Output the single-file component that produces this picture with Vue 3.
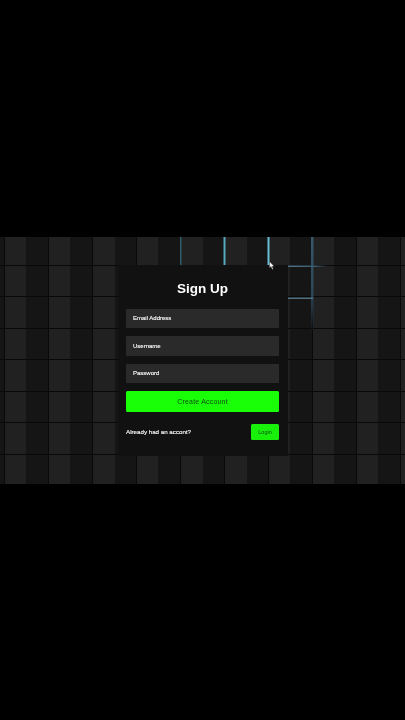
<script setup>
// 11 columns x 9 rows of background tiles, the outer ones get clipped by the hero
const tiles = Array.from({ length: 99 }, (_, i) => i)
</script>

<template>
  <div class="page">
    <section class="hero">
      <div class="tiles">
        <span v-for="t in tiles" :key="t" class="tile"></span>
      </div>

      <svg class="glow" viewBox="0 0 405 247" width="405" height="247" aria-hidden="true">
        <defs>
          <linearGradient id="fadeDown" x1="0" y1="0" x2="0" y2="1">
            <stop offset="0" stop-color="#36586c" />
            <stop offset="0.6" stop-color="#2c4658" />
            <stop offset="1" stop-color="#2c4658" stop-opacity="0" />
          </linearGradient>
          <linearGradient id="fadeRight" x1="0" y1="0" x2="1" y2="0">
            <stop offset="0" stop-color="#4f7486" />
            <stop offset="0.7" stop-color="#3c5b6c" />
            <stop offset="1" stop-color="#3c5b6c" stop-opacity="0" />
          </linearGradient>
        </defs>
        <rect x="180" y="0" width="1.5" height="28" fill="#2f5d6e" />
        <rect x="223.5" y="0" width="2" height="28" fill="#55a8bd" />
        <rect x="267.5" y="0" width="2" height="28" fill="#68bed4" />
        <rect x="311" y="0" width="2.5" height="96" fill="url(#fadeDown)" />
        <rect x="287" y="28.5" width="40" height="1.5" fill="url(#fadeRight)" />
        <rect x="287" y="60.5" width="26" height="1.5" fill="#4f7080" />
      </svg>

      <form class="card" @submit.prevent>
        <h1 class="title">Sign Up</h1>
        <input class="field" type="email" placeholder="Email Address" />
        <input class="field" type="text" placeholder="Username" />
        <input class="field" type="password" placeholder="Password" />
        <button class="create" type="submit">Create Account</button>
        <div class="foot">
          <span class="ask">Already had an accont?</span>
          <button class="login" type="button">Login</button>
        </div>
      </form>

      <svg class="cursor" viewBox="0 0 6 9" width="6" height="9" aria-hidden="true">
        <path d="M0.5 0.5 L0.5 7 L2 5.6 L3.2 8.4 L4.2 8 L3.1 5.3 L5.2 5.2 Z" fill="#f0f0f0" stroke="#222" stroke-width="0.3" />
      </svg>
    </section>
  </div>
</template>

<style>
html,
body {
  margin: 0;
  background: #000;
}
</style>

<style scoped>
.page {
  height: 720px;
  display: flex;
  align-items: center;
  background: #000;
  font-family: "Liberation Sans", Arial, sans-serif;
}

/* the source is a video frame, so everything is a touch soft */
.hero {
  position: relative;
  width: 405px;
  height: 247px;
  overflow: hidden;
  display: grid;
  grid-template-columns: 405px;
  grid-template-rows: 247px;
  place-items: center;
  filter: blur(0.35px);
}

.tiles,
.glow,
.card {
  grid-area: 1 / 1;
}

.tiles {
  width: 484px;
  height: 283.5px;
  display: grid;
  grid-template-columns: repeat(11, 44px);
  grid-template-rows: repeat(9, 31.5px);
  align-self: start;
  justify-self: start;
  margin-top: -2.5px;
  margin-left: -39px;
}

.tile {
  box-sizing: border-box;
  border-right: 1.5px solid #090909;
  border-bottom: 1.5px solid #090909;
  background: linear-gradient(90deg, #212121 50%, #151515 50%);
}

.glow {
  display: block;
}

.card {
  box-sizing: border-box;
  width: 170px;
  height: 191px;
  padding: 15px 8.5px 0;
  display: flex;
  flex-direction: column;
  background: #111;
}

.title {
  margin: 0 0 11px;
  height: 18px;
  font-size: 13.5px;
  line-height: 18px;
  font-weight: 700;
  text-align: center;
  color: #fff;
}

.field {
  box-sizing: border-box;
  height: 19.5px;
  width: 100%;
  margin: 0 0 8px;
  padding: 0 7px;
  border: none;
  outline: none;
  border-radius: 1px;
  background: #2a2a2a;
  font-family: inherit;
  font-size: 6px;
  color: #fff;
  -webkit-text-stroke: 0.12px #fff;
}

.field::placeholder {
  color: #fff;
  opacity: 1;
}

.create {
  height: 20.5px;
  padding: 0;
  border: none;
  border-radius: 1.5px;
  background: #18ff08;
  font-family: inherit;
  font-size: 7px;
  letter-spacing: 0.2px;
  color: #0d4a0d;
}

.foot {
  margin-top: 12px;
  display: flex;
  align-items: center;
  justify-content: space-between;
}

.ask {
  font-size: 6.2px;
  color: #fff;
  -webkit-text-stroke: 0.12px #fff;
}

.login {
  width: 28px;
  height: 16px;
  padding: 0;
  border: none;
  border-radius: 1.5px;
  background: #18f00c;
  font-family: inherit;
  font-size: 5.5px;
  color: #0d4a0d;
}

.cursor {
  position: absolute;
  left: 269px;
  top: 24px;
}
</style>
